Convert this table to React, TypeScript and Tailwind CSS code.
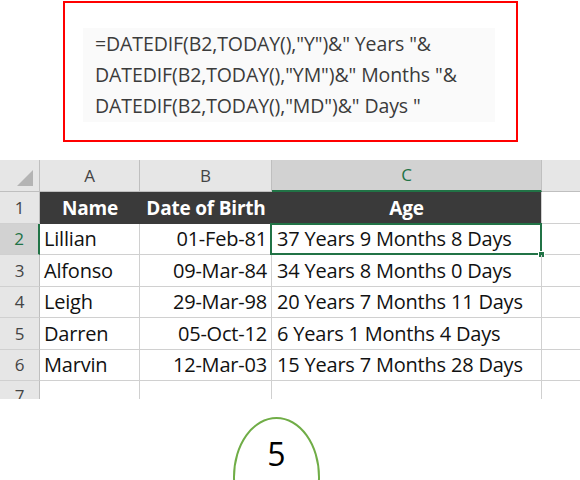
import React from "react"

const rows = [
  { name: "Lillian", dob: "01-Feb-81", age: "37 Years 9 Months 8 Days" },
  { name: "Alfonso", dob: "09-Mar-84", age: "34 Years 8 Months 0 Days" },
  { name: "Leigh", dob: "29-Mar-98", age: "20 Years 7 Months 11 Days" },
  { name: "Darren", dob: "05-Oct-12", age: "6 Years 1 Months 4 Days" },
  { name: "Marvin", dob: "12-Mar-03", age: "15 Years 7 Months 28 Days" },
]

const heights = ["h-[32px]", "h-[31px]", "h-[32px]", "h-[31px]", "h-[32px]", "h-[31px]"]

function RowHead({ n, active, h }: { n: number; active?: boolean; h: string }) {
  return (
    <div
      className={`${h} flex items-center justify-center border-b border-r ${
        active ? "border-r-2 border-r-[#217346] bg-[#d2d2d2] text-[#217346]" : "border-r-[#bfbfbf] bg-[#e6e6e6] text-[#444]"
      } border-b-[#d0d0d0] text-[17px]`}
    >
      {n}
    </div>
  )
}

export default function App() {
  return (
    <div className="h-[480px] overflow-hidden bg-white font-['Open_Sans',sans-serif]">
      {/* formula box */}
      <div className="mt-px ml-[63px] h-[141px] w-[455px] border-2 border-[#f00] pt-[25px] pl-[18px]">
        <div className="h-[94px] w-[412px] bg-[#fafafa] pl-[12px] text-[19.5px] leading-[31px] tracking-[-0.1px] text-[#3b3b3b]">
          <div>=DATEDIF(B2,TODAY(),"Y")&amp;" Years "&amp;</div>
          <div>DATEDIF(B2,TODAY(),"YM")&amp;" Months "&amp;</div>
          <div>DATEDIF(B2,TODAY(),"MD")&amp;" Days "</div>
        </div>
      </div>

      {/* sheet */}
      <div className="mt-[18px] h-[239px] overflow-hidden">
        <div className="grid grid-cols-[40px_100px_132px_270px_1fr] text-[20px] tracking-[-0.2px] text-[#111]">
          {/* column headers */}
          <div className="relative h-[32px] border-b border-r border-[#bfbfbf] bg-[#e6e6e6]">
            <svg className="absolute right-[6px] bottom-[5px]" width="16" height="16" viewBox="0 0 16 16">
              <polygon points="16,0 16,16 0,16" fill="#b4b4b4" />
            </svg>
          </div>
          <div className="flex h-[32px] items-center justify-center border-b border-r border-[#bfbfbf] bg-[#e6e6e6] text-[17px] text-[#444]">A</div>
          <div className="flex h-[32px] items-center justify-center border-b border-r border-[#bfbfbf] bg-[#e6e6e6] text-[17px] text-[#444]">B</div>
          <div className="flex h-[32px] items-center justify-center border-b-2 border-r border-b-[#217346] border-r-[#bfbfbf] bg-[#d2d2d2] text-[17px] text-[#217346]">C</div>
          <div className="h-[32px] border-b border-[#bfbfbf] bg-[#e6e6e6]" />

          {/* row 1 header */}
          <RowHead n={1} h={heights[0]} />
          <div className={`${heights[0]} flex items-center justify-center bg-[#3a3a3a] text-[19px] font-bold text-white`}>Name</div>
          <div className={`${heights[0]} flex items-center justify-center bg-[#3a3a3a] text-[19px] font-bold text-white`}>Date of Birth</div>
          <div className={`${heights[0]} flex items-center justify-center border-r border-[#d0d0d0] bg-[#3a3a3a] text-[19px] font-bold text-white`}>Age</div>
          <div className={`${heights[0]} border-b border-[#d0d0d0]`} />

          {rows.map((r, i) => {
            const h = heights[i + 1]
            const active = i === 0
            return (
              <React.Fragment key={r.name}>
                <RowHead n={i + 2} active={active} h={h} />
                <div className={`${h} flex items-center border-b border-r border-[#d0d0d0] pl-[4px]`}>{r.name}</div>
                <div className={`${h} flex items-center justify-end border-b border-r border-[#d0d0d0] pr-[4px]`}>{r.dob}</div>
                <div className={`${h} relative flex items-center border-b border-r border-[#d0d0d0] pl-[5px]`}>
                  {r.age}
                  {active && (
                    <div className="absolute -top-px -right-px -bottom-px -left-[2px] border-2 border-[#217346]">
                      <div className="absolute -right-[5px] -bottom-[5px] h-[7px] w-[7px] border border-white bg-[#217346]" />
                    </div>
                  )}
                </div>
                <div className={`${h} border-b border-[#d0d0d0]`} />
              </React.Fragment>
            )
          })}

          <RowHead n={7} h="h-[31px]" />
          <div className="h-[31px] border-r border-[#d0d0d0]" />
          <div className="h-[31px] border-r border-[#d0d0d0]" />
          <div className="h-[31px] border-r border-[#d0d0d0]" />
          <div className="h-[31px]" />
        </div>
      </div>

      {/* step marker */}
      <div className="mt-[18px] ml-[233px] flex h-[120px] w-[87px] justify-center rounded-[50%] border-2 border-[#70ad47] pt-[15px] text-[32px] leading-[40px] text-black">
        5
      </div>
    </div>
  )
}
